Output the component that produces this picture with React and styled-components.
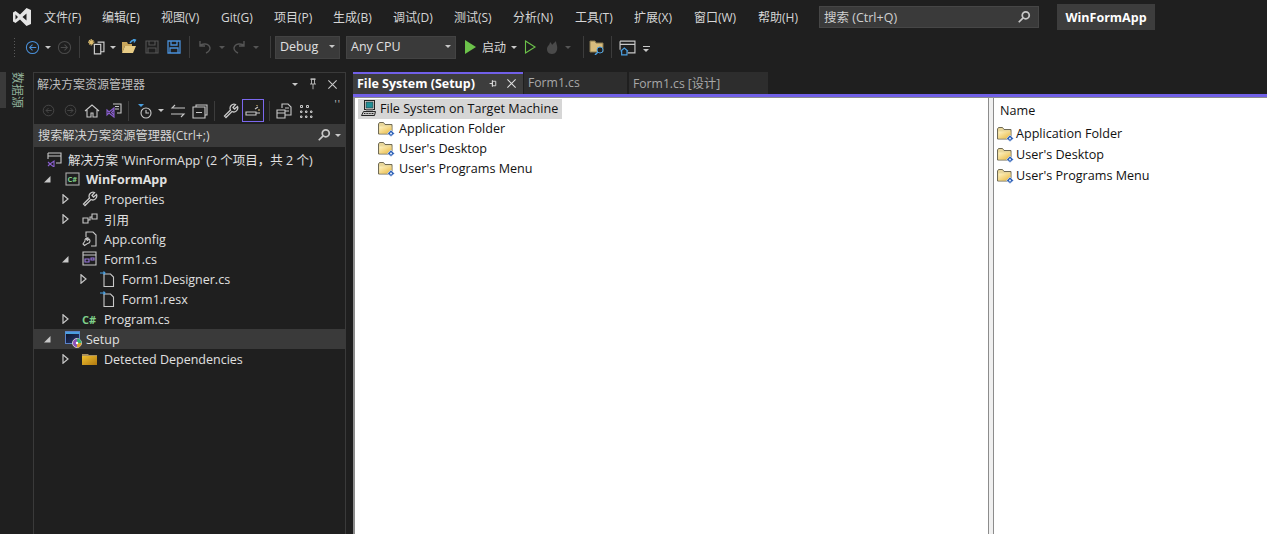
import React from "react";
import styled, { createGlobalStyle } from "styled-components";

const GlobalStyle = createGlobalStyle`
  html, body {
    margin: 0;
    padding: 0;
    background: #1f1f1f;
  }
  * {
    box-sizing: border-box;
  }
`;

const Page = styled.div`
  width: 1267px;
  height: 534px;
  overflow: hidden;
  display: flex;
  flex-direction: column;
  background: #1f1f1f;
  color: #dcdcdc;
  font-family: "Open Sans", "Noto Sans CJK SC", sans-serif;
  font-size: 12px;
`;

const MenuBar = styled.div`
  display: flex;
  align-items: center;
  height: 34px;
  flex: none;
  padding-left: 12px;
`;

const Logo = styled.svg`
  width: 20px;
  height: 20px;
  margin-right: 12px;
`;

const Menu = styled.span`
  width: ${(p) => p.$w}px;
  flex: none;
  white-space: nowrap;
  color: #d6d6d6;
`;

const SearchBox = styled.div`
  width: 220px;
  height: 22px;
  margin-left: 2px;
  padding: 0 7px 1px 4px;
  display: flex;
  align-items: center;
  justify-content: space-between;
  background: #3a3a3a;
  border: 1px solid #464646;
  color: #d0d0d0;
  font-size: 12.5px;
`;

const SolutionBadge = styled.div`
  height: 26px;
  width: 98px;
  margin-left: 18px;
  display: flex;
  align-items: center;
  justify-content: center;
  background: #3d3d3d;
  color: #fff;
  font-weight: 700;
  font-size: 12.5px;
`;

const ToolBar = styled.div`
  display: flex;
  align-items: center;
  height: 26px;
  flex: none;
  padding-left: 13px;
`;

const Grip = styled.div`
  width: 3px;
  height: 20px;
  margin-right: 9px;
  background-image: radial-gradient(#5a5a5a 0.7px, transparent 0.8px);
  background-size: 3px 3px;
`;

const ToolSep = styled.div`
  width: 1px;
  height: ${(p) => p.$h || 22}px;
  margin: 0 ${(p) => p.$m || 8}px 0 ${(p) => p.$l || p.$m || 8}px;
  background: #3c3c3c;
  flex: none;
`;

const Caret = styled.i`
  width: 0;
  height: 0;
  flex: none;
  margin: ${(p) => p.$m || "0 5px"};
  border-left: 3.5px solid transparent;
  border-right: 3.5px solid transparent;
  border-top: 3.5px solid ${(p) => (p.$dim ? "#555" : "#c8c8c8")};
`;

const OverflowCaret = styled(Caret)`
  position: relative;
  margin: 6px 0 0 7px;
  &::before {
    content: "";
    position: absolute;
    left: -3.5px;
    top: -6px;
    width: 7px;
    height: 1px;
    background: #c8c8c8;
  }
`;

const Combo = styled.div`
  width: ${(p) => p.$w}px;
  height: 23px;
  flex: none;
  padding: 0 4px 1px;
  margin-right: ${(p) => p.$mr || 0}px;
  display: flex;
  align-items: center;
  justify-content: space-between;
  background: #3a3a3a;
  border: 1px solid #434343;
  color: #e0e0e0;
  font-size: 12.5px;
`;

const Icon = styled.svg`
  width: ${(p) => p.$s || 16}px;
  height: ${(p) => p.$s || 16}px;
  flex: none;
  margin-right: ${(p) => p.$mr || 0}px;
  margin-left: ${(p) => p.$ml || 0}px;
  display: block;
`;

const RunLabel = styled.span`
  color: #d8d8d8;
  margin-left: 4px;
`;

const Workspace = styled.div`
  flex: 1;
  display: flex;
  min-height: 0;
  margin-top: 12px;
`;

const SideRail = styled.div`
  width: 33px;
  flex: none;
  display: flex;
  align-items: flex-start;
`;

const RailTab = styled.div`
  width: 6px;
  height: 36px;
  background: #3a3a3a;
  margin-right: 5px;
`;

const RailLabel = styled.div`
  writing-mode: vertical-rl;
  text-orientation: sideways;
  color: #8fae98;
  font-size: 12px;
  line-height: 13px;
`;

const Explorer = styled.div`
  width: 313px;
  flex: none;
  border: 1px solid #3a3a3a;
  border-bottom: none;
  display: flex;
  flex-direction: column;
`;

const ExplorerTitle = styled.div`
  height: 24px;
  padding: 0 7px 2px 3px;
  flex: none;
  display: flex;
  align-items: center;
  color: #bdbdbd;
`;

const TitleText = styled.span`
  flex: 1;
  font-size: 12px;
`;

const TitleButtons = styled.div`
  display: flex;
  align-items: center;
  gap: ${(p) => p.$gap || 8}px;
`;

const ExplorerTools = styled.div`
  height: 27px;
  flex: none;
  display: flex;
  align-items: center;
  padding-left: 3px;
  position: relative;
`;

const ToolCell = styled.div`
  width: 22px;
  height: 23px;
  flex: none;
  display: flex;
  align-items: center;
  justify-content: center;
  border: 1px solid ${(p) => (p.$on ? "#7b68ee" : "transparent")};
`;

const Overflow = styled.span`
  position: absolute;
  right: 4px;
  top: 0;
  color: #c8c8c8;
  font-size: 10px;
  letter-spacing: 1px;
`;

const ExplorerSearch = styled.div`
  height: 23px;
  flex: none;
  display: flex;
  align-items: center;
  justify-content: space-between;
  padding: 0 4px 1px;
  background: #3a3a3a;
  color: #d6d6d6;
  font-size: 12.2px;
`;

const Tree = styled.div`
  padding-top: 2px;
  display: flex;
  flex-direction: column;
`;

const Row = styled.div`
  height: 20px;
  flex: none;
  display: flex;
  align-items: center;
  padding-left: ${(p) => p.$indent}px;
  background: ${(p) => (p.$selected ? "#3a3a3a" : "transparent")};
  color: #e0e0e0;
  font-size: 12.5px;
  font-weight: ${(p) => (p.$bold ? 700 : 400)};
  white-space: nowrap;
`;

const ArrowCell = styled.span`
  width: ${(p) => p.$w || 20}px;
  flex: none;
  display: flex;
  align-items: center;
`;

const RowIcon = styled.span`
  width: ${(p) => p.$w || 22}px;
  flex: none;
  display: flex;
  align-items: center;
`;

const CSharpGlyph = styled(RowIcon)`
  color: #7fd08a;
  font-weight: 700;
  font-size: 11px;
`;

const Document = styled.div`
  flex: 1;
  min-width: 0;
  margin-left: 7px;
  display: flex;
  flex-direction: column;
`;

const TabStrip = styled.div`
  height: 25px;
  flex: none;
  display: flex;
  align-items: stretch;
  border-bottom: 3px solid #7160e8;
`;

const Tab = styled.div`
  width: ${(p) => p.$w}px;
  margin-right: ${(p) => p.$mr || 0}px;
  height: 22px;
  flex: none;
  display: flex;
  align-items: center;
  padding: 0 0 ${(p) => (p.$active ? 1 : 3)}px 4px;
  background: ${(p) => (p.$active ? "#3d3d3d" : "#2d2d2d")};
  border-top: 2px solid ${(p) => (p.$active ? "#7160e8" : "transparent")};
  color: ${(p) => (p.$active ? "#fff" : "#a8a8a8")};
  font-weight: ${(p) => (p.$active ? 700 : 400)};
  font-size: ${(p) => (p.$active ? 12.5 : 12.2)}px;
`;

const TabName = styled.span`
  flex: 1;
`;

const TabButtons = styled.div`
  display: flex;
  align-items: center;
  gap: 8px;
  padding-right: 6px;
`;

const Panes = styled.div`
  flex: 1;
  min-height: 0;
  display: flex;
  background: #8c8c8c;
  padding: 1px 0 0 2px;
  font-size: 12.6px;
`;

const TreePane = styled.div`
  width: 633px;
  flex: none;
  background: #fff;
  color: #111;
  padding: 1px 0 0 3px;
`;

const Splitter = styled.div`
  width: 6px;
  flex: none;
  background: #f0f0f0;
  border-left: 1px solid #8c8c8c;
  border-right: 1px solid #8c8c8c;
`;

const ListPane = styled.div`
  flex: 1;
  background: #fff;
  color: #111;
  padding: 3px 0 0 3px;
`;

const RootNode = styled.div`
  width: 204px;
  height: 20px;
  display: flex;
  align-items: center;
  padding: 0 0 2px 3px;
  gap: 3px;
  background: #d6d6d6;
  white-space: nowrap;
`;

const FolderNode = styled.div`
  height: 20px;
  display: flex;
  align-items: center;
  padding: 0 0 2px 20px;
  gap: 4px;
  white-space: nowrap;
`;

const ListHeader = styled.div`
  height: 20px;
  display: flex;
  align-items: center;
  padding: 0 0 2px 3px;
  margin-bottom: 3px;
`;

const ListItem = styled.div`
  height: 21px;
  display: flex;
  align-items: center;
  padding-bottom: 2px;
  gap: 2px;
  white-space: nowrap;
`;

const Stroke = ({ children, s = 16, mr, ml, color = "#c8c8c8", w = 1.1 }) => (
  <Icon $s={s} $mr={mr} $ml={ml} viewBox="0 0 16 16" fill="none" stroke={color} strokeWidth={w}>
    {children}
  </Icon>
);

const CircleArrow = ({ color, back, s = 16 }) => (
  <Stroke color={color} s={s}>
    <circle cx="8" cy="8" r="6.500" />
    <path d={back ? "M12 8H5M8 5 5 8l3 3" : "M4 8h7M8 5l3 3-3 3"} />
  </Stroke>
);

const OpenArrow = () => (
  <Icon $s={7} viewBox="0 0 7 7">
    <path d="M0 6.500 6.500 6.500V0z" fill="#c8c8c8" />
  </Icon>
);

const ClosedArrow = () => (
  <Icon $s={10} viewBox="0 0 10 10">
    <path d="M1 .8 6 5 1 9.200z" fill="none" stroke="#c8c8c8" strokeWidth="1.200" />
  </Icon>
);

const Magnifier = ({ s = 14 }) => (
  <Stroke s={s} w={2}>
    <circle cx="10" cy="6" r="4" />
    <path d="M7 9l-5 5" />
  </Stroke>
);

const Wrench = () => (
  <Stroke w={1.3}>
    <path d="M14.500 3.500 11.500 6 10 4.500 12.500 1.500A4 4 0 0 0 7.500 7L1.500 13l1.500 1.500 6-6A4 4 0 0 0 14.500 3.500z" />
  </Stroke>
);

const Folder = ({ id }) => (
  <Icon viewBox="0 0 17 16" $s={17}>
    <defs>
      <linearGradient id={id} x1="0" y1="0" x2="1" y2="1">
        <stop offset="0" stopColor="#fff3c4" />
        <stop offset="1" stopColor="#e8b840" />
      </linearGradient>
    </defs>
    <path d="M.5 3.500 1.500 2h4l1.500 2h7v9.500H.5z" fill="#e9d79a" stroke="#6f6a55" />
    <path d="M1.500 6h12v7h-12z" fill={`url(#${id})`} />
    <path d="M13 9.500 16.500 13 13 16 9.500 13z" fill="#2f62b8" stroke="#dfe8f8" strokeWidth=".6" />
    <circle cx="13" cy="13" r="1" fill="#e8f0ff" />
  </Icon>
);

const Computer = () => (
  <Icon viewBox="0 0 16 16">
    <rect x="3.500" y=".5" width="10" height="9" fill="#d8d8d8" stroke="#222" />
    <rect x="5" y="2" width="7" height="6" fill="#1f8f96" stroke="#333" strokeWidth=".6" />
    <path d="M5 9.500h7v1.500H5z" fill="#999" />
    <path d="M.5 15.500l2-4h12l-1 4z" fill="#c8c8c8" stroke="#222" />
    <path d="M3 13.500h10" stroke="#222" strokeDasharray="1 .6" />
  </Icon>
);

const FileIcon = () => (
  <Stroke>
    <path d="M4 3h6.500l3 3v9.500H4z" />
    <path d="M0 2h5M3.500.5 5 2 3.500 3.500" stroke="#4a9fe0" />
  </Stroke>
);

const SetupIcon = () => (
  <Icon viewBox="0 0 17 17" $s={17}>
    <defs>
      <linearGradient id="setupScreen" x1="0" y1="0" x2="1" y2="1">
        <stop offset="0" stopColor="#0a1020" />
        <stop offset="1" stopColor="#2a3c78" />
      </linearGradient>
    </defs>
    <rect x=".5" y=".5" width="14" height="12" fill="url(#setupScreen)" stroke="#5a82c8" />
    <path d="M.5 2h14" stroke="#4a9fe0" strokeWidth="2" />
    <circle cx="12" cy="12" r="4.500" fill="#8a4fb8" stroke="#cfcfcf" />
    <path d="M12 12 12 7.500A4.500 4.500 0 0 1 16.500 12z" fill="#38b070" />
    <path d="M12 12 16.500 12A4.500 4.500 0 0 1 12 16.500z" fill="#d8a030" />
    <circle cx="12" cy="12" r="1.200" fill="#fff" />
  </Icon>
);

const DependencyFolder = () => (
  <Icon viewBox="0 0 16 16">
    <defs>
      <linearGradient id="depFolder" x1="0" y1="0" x2="1" y2="1">
        <stop offset="0" stopColor="#f0c030" />
        <stop offset="1" stopColor="#b07810" />
      </linearGradient>
    </defs>
    <path d="M0 3h6l1 1h8v2H0z" fill="#a89060" />
    <path d="M0 5h15v9H0z" fill="url(#depFolder)" />
  </Icon>
);

const folders = ["Application Folder", "User's Desktop", "User's Programs Menu"];

const App = () => {
  return (
    <Page>
      <GlobalStyle />
      <MenuBar>
        <Logo viewBox="0 0 20 20">
          <path
            d="M14.500 1 19 3v14l-4.500 2L8 12.500 3.500 16 1 14.500v-9L3.500 4 8 7.500zM3.500 7.500v5L6 10zM14.500 6.500 10.500 10l4 3.500z"
            fill="#e4e4e4"
            fillRule="evenodd"
          />
        </Logo>
        <Menu $w={58}>文件(F)</Menu>
        <Menu $w={59}>编辑(E)</Menu>
        <Menu $w={60}>视图(V)</Menu>
        <Menu $w={53}>Git(G)</Menu>
        <Menu $w={59}>项目(P)</Menu>
        <Menu $w={60}>生成(B)</Menu>
        <Menu $w={61}>调试(D)</Menu>
        <Menu $w={59}>测试(S)</Menu>
        <Menu $w={62}>分析(N)</Menu>
        <Menu $w={59}>工具(T)</Menu>
        <Menu $w={60}>扩展(X)</Menu>
        <Menu $w={64}>窗口(W)</Menu>
        <Menu $w={59}>帮助(H)</Menu>
        <SearchBox>
          <span>搜索 (Ctrl+Q)</span>
          <Magnifier />
        </SearchBox>
        <SolutionBadge>WinFormApp</SolutionBadge>
      </MenuBar>

      <ToolBar>
        <Grip />
        <CircleArrow color="#4a90d9" back s={15} />
        <Caret $m="0 6px 0 5px" />
        <CircleArrow color="#4a4a4a" s={15} />
        <ToolSep $m={7} />
        <Stroke s={17} color="#d0d0d0" ml={1}>
          <path d="M6 5h6v9H6zM9 3h6v9h-3" />
          <path d="M3 0v6M0 3h6M1 1l4 4M5 1 1 5" stroke="#e0c070" />
        </Stroke>
        <Caret />
        <Icon $s={16} $mr={7} viewBox="0 0 16 16">
          <path d="M1 3h5l1 2h4v2H4L1 14z" fill="#c9a65b" />
          <path d="M4 7h11l-3 7H1z" fill="#e8cc85" />
          <path d="M9 4c1-2 3-3 5-3M12 0l2.500 1L13 3.500" fill="none" stroke="#4a9fe0" strokeWidth="1.300" />
        </Icon>
        <Stroke color="#555" mr={6}>
          <path d="M2 2h12v12H2zM5 2v4h6V2M4 14V9h8v5" />
        </Stroke>
        <Stroke color="#4a90d9" w={1.3}>
          <path d="M2 2h12v12H2zM5 2v4h6V2M4 14V9h8v5" />
        </Stroke>
        <ToolSep $m={7} />
        <Stroke color="#555" w={1.4}>
          <path d="M3 2v5h5M3 7c2-3 9-3 10 2 0 2-2 4-4 5" />
        </Stroke>
        <Caret $dim $m="0 6px" />
        <Stroke color="#555" w={1.4}>
          <path d="M13 2v5H8M13 7c-2-3-9-3-10 2 0 2 2 4 4 5" />
        </Stroke>
        <Caret $dim $m="0 5px 0 6px" />
        <ToolSep $l={6} $m={4} />
        <Combo $w={65} $mr={6}>
          <span>Debug</span>
          <Caret $m="0" />
        </Combo>
        <Combo $w={110}>
          <span>Any CPU</span>
          <Caret $m="0" />
        </Combo>
        <Icon $s={16} $ml={6} viewBox="0 0 16 16">
          <path d="M3 1l11 7-11 7z" fill="#6cc24a" />
        </Icon>
        <RunLabel>启动</RunLabel>
        <Caret />
        <Stroke color="#6cc24a" mr={6}>
          <path d="M3.500 2l9.500 6-9.500 6z" />
        </Stroke>
        <Icon $s={16} viewBox="0 0 16 16">
          <path d="M8 15c-4 0-5-3-5-5 0-3 3-4 3-7 1 1 2 2 2 3 1-1 3-3 4-4 0 3 2 5 1 9-1 3-3 4-5 4z" fill="#4a4a4a" />
        </Icon>
        <Caret $dim $m="0 7px 0 5px" />
        <ToolSep $m={5} />
        <Icon $s={16} viewBox="0 0 16 16">
          <path d="M1 2h5l1 2h7v9H1z" fill="#d9bd7d" stroke="#8a7a50" />
          <circle cx="11" cy="11" r="3" fill="#1f1f1f" stroke="#4a9fe0" />
          <path d="M9 13l-3 3" stroke="#4a9fe0" strokeWidth="1.400" />
        </Icon>
        <ToolSep $l={6} $m={7} />
        <Stroke s={17} color="#c8c8c8">
          <path d="M1 2h14v11H8M1 2v8M1 5h14" />
          <path d="M1.500 11.500 5 8.500l3.500 3M2.500 11v4h5v-4" stroke="#4a9fe0" />
        </Stroke>
        <OverflowCaret />
      </ToolBar>

      <Workspace>
        <SideRail>
          <RailTab />
          <RailLabel>数据源</RailLabel>
        </SideRail>
        <Explorer>
          <ExplorerTitle>
            <TitleText>解决方案资源管理器</TitleText>
            <TitleButtons>
              <Caret $m="0 1px 0 0" />
              <Stroke s={12}>
                <path d="M5 1h6v1H5zM6 2v6M10 2v6M4 8h8M8 8v7" />
              </Stroke>
              <Stroke s={11} w={1.6}>
                <path d="M2 2l12 12M14 2 2 14" />
              </Stroke>
            </TitleButtons>
          </ExplorerTitle>
          <ExplorerTools>
            <ToolCell><CircleArrow color="#4a4a4a" back s={13} /></ToolCell>
            <ToolCell><CircleArrow color="#4a4a4a" s={13} /></ToolCell>
            <ToolCell>
              <Stroke>
                <path d="M1 8l7-6 7 6M3 7v7h4v-4h2v4h4V7" />
              </Stroke>
            </ToolCell>
            <ToolCell>
              <Stroke>
                <path d="M7 1h8v9H11M9 3.500h4M9 6h4" />
                <path d="M1 7l2 2 5-4v9l-5-4-2 2zM8 7 5.500 9.500 8 12" stroke="#8a5fd0" />
              </Stroke>
            </ToolCell>
            <ToolSep $h={20} $l={3} $m={5} />
            <ToolCell>
              <Stroke>
                <circle cx="9" cy="10" r="5" />
                <path d="M9 7v3h3" />
                <path d="M1 1h6L4 4z" fill="#4a9fe0" stroke="none" />
              </Stroke>
            </ToolCell>
            <Caret $m="0 3px 0 2px" />
            <ToolCell>
              <Stroke>
                <path d="M5 2 2 5h13M11 14l3-3H1" />
              </Stroke>
            </ToolCell>
            <ToolCell>
              <Stroke>
                <path d="M4 4V2h11v10h-2M1 4h12v11H1zM4 9.500h6" />
              </Stroke>
            </ToolCell>
            <ToolSep $h={20} $l={3} $m={5} />
            <ToolCell><Wrench /></ToolCell>
            <ToolCell $on>
              <Stroke>
                <path d="M1 9h10v3H1zM11 10h4M10 6l3-2" />
                <path d="M13 7h2M12 2v1" stroke="#e0c070" />
              </Stroke>
            </ToolCell>
            <ToolSep $h={20} $l={5} $m={3} />
            <ToolCell>
              <Stroke>
                <path d="M6 5V1h6l3 3v8H9M9 5h4M9 8h4M1 7h8v8H1zM1 10h8" />
              </Stroke>
            </ToolCell>
            <ToolCell>
              <Stroke w={1}>
                <path d="M2.500 2.500h2v2h-2zM8.500 2.500h2v2h-2zM2.500 8h1.500v1.500H2.500zM7.500 8h1.500v1.500H7.500zM12.500 8h1.500v1.500h-1.500zM2.500 13h1.500v1.500H2.500zM7.500 13h1.500v1.500H7.500zM12.500 13h1.500v1.500h-1.500z" />
              </Stroke>
            </ToolCell>
            <Overflow>''</Overflow>
          </ExplorerTools>
          <ExplorerSearch>
            <span>搜索解决方案资源管理器(Ctrl+;)</span>
            <TitleButtons $gap={4}>
              <Magnifier />
              <Caret $m="0" />
            </TitleButtons>
          </ExplorerSearch>
          <Tree>
            <Row $indent={13}>
              <RowIcon $w={21}>
                <Stroke>
                  <path d="M1 2h13v10H9M1 2v6M1 5h13" />
                  <path d="M1 11l2 2 4-3v6l-4-3-2 2" stroke="#8a5fd0" />
                </Stroke>
              </RowIcon>
              解决方案 'WinFormApp' (2 个项目，共 2 个)
            </Row>
            <Row $indent={10} $bold>
              <ArrowCell $w={21}><OpenArrow /></ArrowCell>
              <RowIcon $w={21}>
                <Stroke color="#aaa">
                  <rect x="1" y="2" width="13" height="12" />
                  <text x="2.500" y="11" fontSize="7.500" fill="#7fd08a" stroke="none" fontWeight="700">C#</text>
                </Stroke>
              </RowIcon>
              WinFormApp
            </Row>
            <Row $indent={28}>
              <ArrowCell><ClosedArrow /></ArrowCell>
              <RowIcon><Wrench /></RowIcon>
              Properties
            </Row>
            <Row $indent={28}>
              <ArrowCell><ClosedArrow /></ArrowCell>
              <RowIcon>
                <Stroke>
                  <path d="M1 7h5v5H1zM10 3h5v5h-5zM6 9h2V6h2" />
                </Stroke>
              </RowIcon>
              引用
            </Row>
            <Row $indent={48}>
              <RowIcon>
                <Stroke>
                  <path d="M4 6V1h7l3 3v11H9" />
                  <path d="M7 8 5.500 9.500 4.500 8.500 6 7a2.500 2.500 0 0 0-3 3l-2 3 1.500 1.500 3-2A2.500 2.500 0 0 0 7 8z" />
                </Stroke>
              </RowIcon>
              App.config
            </Row>
            <Row $indent={28}>
              <ArrowCell><OpenArrow /></ArrowCell>
              <RowIcon>
                <Stroke>
                  <path d="M1 1h13v13H1zM1 4h13" />
                  <path d="M3 8h4v3H3zM9 7h3v2H9z" stroke="#9a78e0" />
                </Stroke>
              </RowIcon>
              Form1.cs
            </Row>
            <Row $indent={46}>
              <ArrowCell><ClosedArrow /></ArrowCell>
              <RowIcon><FileIcon /></RowIcon>
              Form1.Designer.cs
            </Row>
            <Row $indent={66}>
              <RowIcon><FileIcon /></RowIcon>
              Form1.resx
            </Row>
            <Row $indent={28}>
              <ArrowCell><ClosedArrow /></ArrowCell>
              <CSharpGlyph>C#</CSharpGlyph>
              Program.cs
            </Row>
            <Row $indent={10} $selected>
              <ArrowCell $w={21}><OpenArrow /></ArrowCell>
              <RowIcon $w={21}><SetupIcon /></RowIcon>
              Setup
            </Row>
            <Row $indent={28}>
              <ArrowCell><ClosedArrow /></ArrowCell>
              <RowIcon><DependencyFolder /></RowIcon>
              Detected Dependencies
            </Row>
          </Tree>
        </Explorer>
        <Document>
          <TabStrip>
            <Tab $active $w={170} $mr={1}>
              <TabName>File System (Setup)</TabName>
              <TabButtons>
                <Stroke s={9} color="#e0e0e0" w={1.6}>
                  <path d="M1 8h5M6 4h6v8H6zM6 2v12" />
                </Stroke>
                <Stroke s={11} color="#e0e0e0" w={1.5}>
                  <path d="M2 2l12 12M14 2 2 14" />
                </Stroke>
              </TabButtons>
            </Tab>
            <Tab $w={103} $mr={2}>Form1.cs</Tab>
            <Tab $w={139}>Form1.cs [设计]</Tab>
          </TabStrip>
          <Panes>
            <TreePane>
              <RootNode>
                <Computer />
                File System on Target Machine
              </RootNode>
              {folders.map((name, i) => (
                <FolderNode key={name}>
                  <Folder id={`treeFolder${i}`} />
                  {name}
                </FolderNode>
              ))}
            </TreePane>
            <Splitter />
            <ListPane>
              <ListHeader>Name</ListHeader>
              {folders.map((name, i) => (
                <ListItem key={name}>
                  <Folder id={`listFolder${i}`} />
                  {name}
                </ListItem>
              ))}
            </ListPane>
          </Panes>
        </Document>
      </Workspace>
    </Page>
  );
};

export default App;
